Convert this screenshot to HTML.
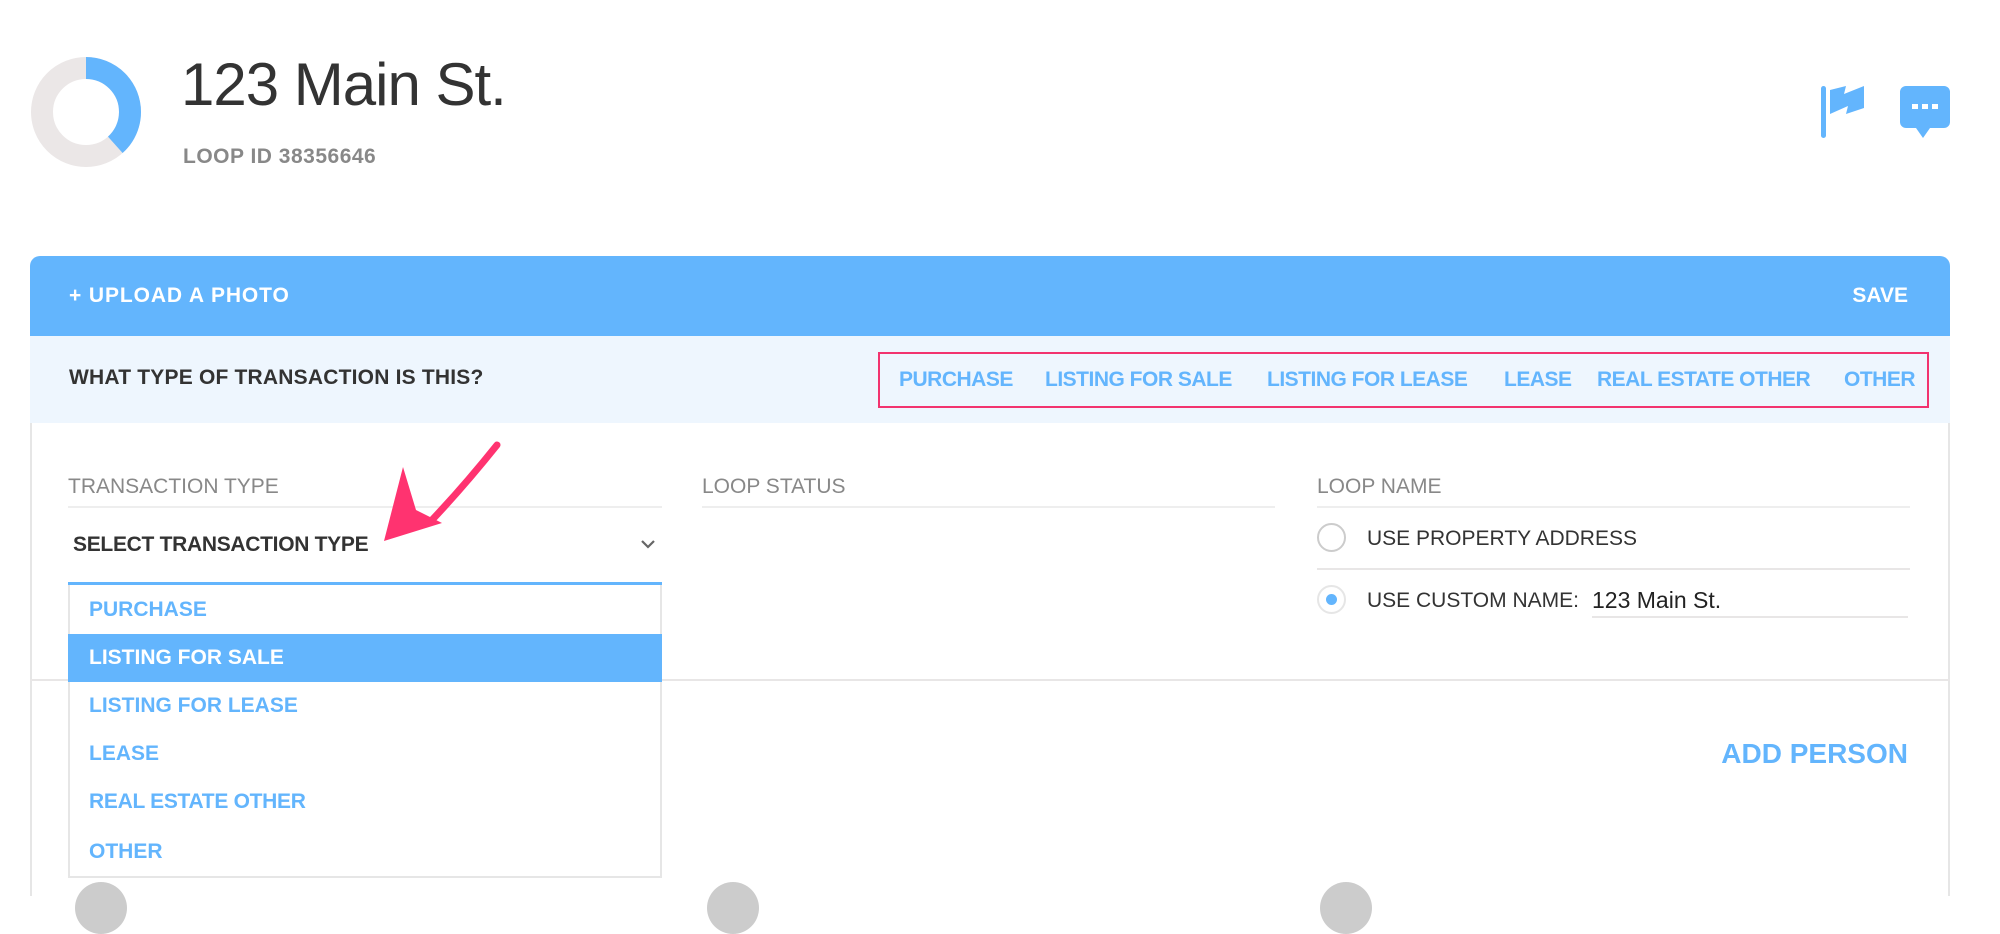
<!DOCTYPE html>
<html><head><meta charset="utf-8"><style>
*{margin:0;padding:0;box-sizing:border-box}
body{width:2000px;height:896px;background:#fff;position:relative;overflow:hidden;font-family:"Liberation Sans",sans-serif}
.a{position:absolute;white-space:nowrap}
.b{font-weight:bold}
.blue{color:#63b5fd}
</style></head><body>
<svg class="a" style="left:30px;top:56px" width="112" height="112" viewBox="0 0 112 112">
<circle cx="56" cy="56" r="44" fill="none" stroke="#ebe7e7" stroke-width="22"/>
<circle cx="56" cy="56" r="44" fill="none" stroke="#63b5fd" stroke-width="22" stroke-dasharray="106 400" transform="rotate(-90 56 56)"/>
</svg>
<div class="a" style="left:181px;top:50px;font-size:60px;color:#333;letter-spacing:-1px">123 Main St.</div>
<div class="a b" style="left:183px;top:145px;font-size:21px;color:#888;letter-spacing:0.5px">LOOP ID 38356646</div>
<svg class="a" style="left:1818px;top:84px" width="50" height="56" viewBox="0 0 50 56">
<rect x="3" y="2" width="5" height="52" rx="2.5" fill="#63b5fd"/>
<path d="M12 6 L28 2 L26 10 L46 2 L46 24 L28 30 L30 22 L12 30 Z" fill="#63b5fd"/>
</svg>
<svg class="a" style="left:1900px;top:86px" width="50" height="54" viewBox="0 0 50 54">
<path d="M6 0 H44 A6 6 0 0 1 50 6 V36 A6 6 0 0 1 44 42 H30 L23 52 L16 42 H6 A6 6 0 0 1 0 36 V6 A6 6 0 0 1 6 0 Z" fill="#63b5fd"/>
<rect x="12" y="18" width="6" height="5" fill="#fff"/><rect x="22" y="18" width="6" height="5" fill="#fff"/><rect x="32" y="18" width="6" height="5" fill="#fff"/>
</svg>
<div class="a" style="left:30px;top:256px;width:1920px;height:80px;background:#63b5fd;border-radius:10px 10px 0 0"></div>
<div class="a b" style="left:69px;top:284px;font-size:21px;color:#fff;letter-spacing:0.9px">+ UPLOAD A PHOTO</div>
<div class="a b" style="left:1840px;top:284px;width:68px;text-align:right;font-size:21px;color:#fff">SAVE</div>
<div class="a" style="left:30px;top:336px;width:1920px;height:87px;background:#eef6fe"></div>
<div class="a b" style="left:69px;top:366px;font-size:21px;color:#333;letter-spacing:0.2px">WHAT TYPE OF TRANSACTION IS THIS?</div>
<div class="a" style="left:878px;top:352px;width:1051px;height:56px;border:2px solid #f2336f"></div>
<div class="a b blue" style="left:899px;top:368px;font-size:21px;letter-spacing:-0.5px">
<span style="position:absolute;left:0">PURCHASE</span>
<span style="position:absolute;left:146px">LISTING FOR SALE</span>
<span style="position:absolute;left:368px">LISTING FOR LEASE</span>
<span style="position:absolute;left:605px">LEASE</span>
<span style="position:absolute;left:698px">REAL ESTATE OTHER</span>
<span style="position:absolute;left:945px">OTHER</span>
</div>
<div class="a" style="left:30px;top:423px;width:2px;height:473px;background:#e6e6e6"></div>
<div class="a" style="left:1948px;top:423px;width:2px;height:473px;background:#e6e6e6"></div>
<div class="a" style="left:30px;top:679px;width:1920px;height:2px;background:#e8e6e6"></div>
<div class="a" style="left:68px;top:475px;font-size:21px;color:#888">TRANSACTION TYPE</div>
<div class="a" style="left:702px;top:475px;font-size:21px;color:#888">LOOP STATUS</div>
<div class="a" style="left:1317px;top:475px;font-size:21px;color:#888">LOOP NAME</div>
<div class="a" style="left:68px;top:506px;width:594px;height:2px;background:#eee"></div>
<div class="a" style="left:702px;top:506px;width:573px;height:2px;background:#eee"></div>
<div class="a" style="left:1317px;top:506px;width:593px;height:2px;background:#eee"></div>
<div class="a b" style="left:73px;top:533px;font-size:21px;color:#333;letter-spacing:-0.3px">SELECT TRANSACTION TYPE</div>
<svg class="a" style="left:640px;top:538px" width="16" height="12" viewBox="0 0 16 12"><path d="M2 3 L8 9 L14 3" fill="none" stroke="#666" stroke-width="2.2"/></svg>
<div class="a" style="left:68px;top:582px;width:594px;height:3px;background:#63b5fd"></div>
<div class="a" style="left:68px;top:585px;width:594px;height:293px;border:2px solid #e6e6e6;border-top:none;background:#fff"></div>
<div class="a" style="left:68px;top:634px;width:594px;height:48px;background:#63b5fd"></div>
<div class="a b blue" style="left:89px;top:598px;font-size:21px">PURCHASE</div>
<div class="a b" style="left:89px;top:646px;font-size:21px;color:#fff">LISTING FOR SALE</div>
<div class="a b blue" style="left:89px;top:694px;font-size:21px">LISTING FOR LEASE</div>
<div class="a b blue" style="left:89px;top:742px;font-size:21px">LEASE</div>
<div class="a b blue" style="left:89px;top:790px;font-size:21px;letter-spacing:-0.3px">REAL ESTATE OTHER</div>
<div class="a b blue" style="left:89px;top:840px;font-size:21px">OTHER</div>
<div class="a" style="left:1317px;top:523px;width:29px;height:29px;border:2px solid #ccc;border-radius:50%"></div>
<div class="a" style="left:1367px;top:527px;font-size:21px;color:#333">USE PROPERTY ADDRESS</div>
<div class="a" style="left:1317px;top:568px;width:593px;height:2px;background:#e8e6e6"></div>
<div class="a" style="left:1317px;top:585px;width:29px;height:29px;border:2px solid #e6e6e6;border-radius:50%"></div>
<div class="a" style="left:1326px;top:594px;width:11px;height:11px;background:#63b5fd;border-radius:50%"></div>
<div class="a" style="left:1367px;top:589px;font-size:21px;color:#333">USE CUSTOM NAME:</div>
<div class="a" style="left:1592px;top:587px;font-size:23px;color:#222">123 Main St.</div>
<div class="a" style="left:1592px;top:616px;width:316px;height:2px;background:#e8e6e6"></div>
<div class="a b blue" style="left:1700px;top:738px;width:208px;text-align:right;font-size:28px">ADD PERSON</div>
<div class="a" style="left:75px;top:882px;width:52px;height:52px;border-radius:50%;background:#ccc"></div>
<div class="a" style="left:707px;top:882px;width:52px;height:52px;border-radius:50%;background:#ccc"></div>
<div class="a" style="left:1320px;top:882px;width:52px;height:52px;border-radius:50%;background:#ccc"></div>
<svg class="a" style="left:370px;top:435px" width="140" height="120" viewBox="0 0 140 120">
<path d="M127 10 Q95 50 62 85" fill="none" stroke="#ff3370" stroke-width="7" stroke-linecap="round"/>
<path d="M14 106 L33 32 L46 75 L72 88 Z" fill="#ff3370"/>
</svg>
</body></html>
